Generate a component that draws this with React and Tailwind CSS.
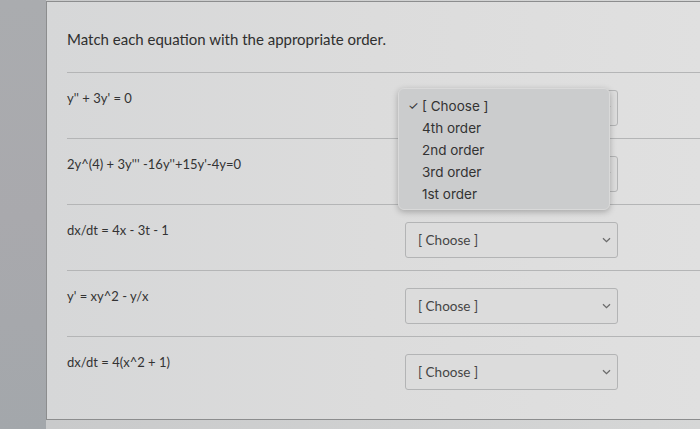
import React from "react";

const rows = [
  "y'' + 3y' = 0",
  "2y^(4) + 3y''' -16y''+15y'-4y=0",
  "dx/dt = 4x - 3t - 1",
  "y' = xy^2 - y/x",
  "dx/dt = 4(x^2 + 1)",
];

function Chevron() {
  return (
    <svg width="9" height="6" viewBox="0 0 9 6" className="shrink-0">
      <path d="M1 1.2 L4.5 4.6 L8 1.2" fill="none" stroke="#6b6b6b" strokeWidth="1.3" />
    </svg>
  );
}

export default function App() {
  return (
    <div
      className="relative w-[700px] h-[429px] overflow-hidden flex bg-linear-to-r from-[#c8c9ca] to-[#d6d7d7]"
      style={{ fontFamily: "Lato, 'Open Sans', sans-serif" }}
    >
      <div className="w-[46px] h-full shrink-0 bg-linear-to-b from-[#aaacaf] via-[#a9a9ad] to-[#a3a7ab]" />
      <div className="flex-1 pt-[1px]">
        <div className="h-[419px] border-l border-t border-b border-[#8c8d8e] bg-linear-to-r from-[#d6d7d8] via-[#dcdcdc] to-[#e0e0e0] pl-[20px] pt-[27px] pb-[16px]">
          <div className="text-[15px] leading-[20px] text-[#2f2f2f] h-[43px]">
            Match each equation with the appropriate order.
          </div>
          {rows.map((r, i) => (
            <div
              key={i}
              className="h-[66px] border-t border-[#b4b5b6] flex items-start justify-between"
            >
              <div className="pt-[16px] text-[13px] leading-[18px] text-[#333]">{r}</div>
              <div className="mt-[17px] mr-[82px] w-[213px] h-[36px] rounded-[3px] border border-[#b3b4b5] bg-[#dcdcdc] flex items-center justify-between pl-[12px] pr-[6px]">
                <span className="text-[13.5px] text-[#454545]">[ Choose ]</span>
                <Chevron />
              </div>
            </div>
          ))}
        </div>
      </div>

      <div
        className="absolute left-[398px] top-[88px] w-[212px] h-[122px] rounded-[6px] bg-[#cbcccd] border border-[#d9d9d9] shadow-[0_2px_6px_rgba(0,0,0,0.25)] pt-[6px] text-[13.5px] leading-[22px] text-[#333]"
        style={{ fontFamily: "Inter, 'Noto Sans', sans-serif" }}
      >
        <div className="flex items-center">
          <span className="w-[23px] pl-[9px] text-[12px]">✓</span>
          <span>[ Choose ]</span>
        </div>
        {["4th order", "2nd order", "3rd order", "1st order"].map((o) => (
          <div key={o} className="pl-[23px]">{o}</div>
        ))}
      </div>
    </div>
  );
}
